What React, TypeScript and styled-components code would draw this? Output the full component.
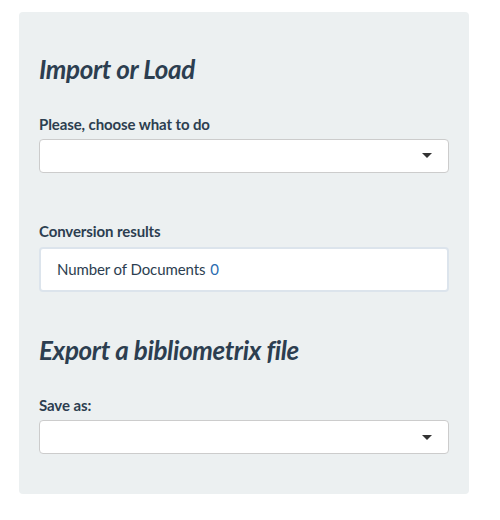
import React from "react";
import styled, { createGlobalStyle } from "styled-components";

const Global = createGlobalStyle`
  html, body { margin: 0; padding: 0; background: #ffffff; }
  body { font-family: Lato, "Noto Sans", sans-serif; color: #2c3e50; }
`;

const Page = styled.div`
  padding: 12px 31px 20px 19px;
`;

const Well = styled.div`
  background: #ecf0f1;
  border-radius: 4px;
  padding: 43px 20px 40px 20px;
  display: flex;
  flex-direction: column;
`;

const Heading = styled.h3<{ $top?: number }>`
  margin: ${(p) => p.$top ?? 0}px 0 0 0;
  font-size: 26px;
  font-weight: 700;
  font-style: italic;
  line-height: 1.1;
  color: #2c3e50;
  letter-spacing: -0.35px;
`;

const Label = styled.label<{ $top: number }>`
  display: block;
  margin-top: ${(p) => p.$top}px;
  font-size: 15px;
  font-weight: 700;
  line-height: 20px;
  color: #2c3e50;
  letter-spacing: -0.1px;
`;

const SelectBox = styled.div`
  margin-top: 5px;
  height: 34px;
  box-sizing: border-box;
  background: #fff;
  border: 1px solid #cccccc;
  border-radius: 4px;
  display: flex;
  align-items: center;
  justify-content: flex-end;
  padding-right: 16px;
`;

const Caret = styled.span`
  width: 0;
  height: 0;
  border-left: 5px solid transparent;
  border-right: 5px solid transparent;
  border-top: 5px solid #333;
`;

const Result = styled.div`
  margin-top: 6px;
  height: 45px;
  box-sizing: border-box;
  background: #fff;
  border: 2px solid #dce4ec;
  border-radius: 4px;
  display: flex;
  align-items: center;
  gap: 5px;
  padding-left: 16px;
  font-size: 15px;
  color: #2c3e50;
  letter-spacing: -0.1px;
`;

const Value = styled.span`
  color: #2a6bb0;
`;

export default function App() {
  return (
    <>
      <Global />
      <Page>
        <Well>
          <Heading>Import or Load</Heading>
          <Label $top={30}>Please, choose what to do</Label>
          <SelectBox>
            <Caret />
          </SelectBox>
          <Label $top={48}>Conversion results</Label>
          <Result>
            <span>Number of Documents</span>
            <Value>0</Value>
          </Result>
          <Heading $top={44}>Export a bibliometrix file</Heading>
          <Label $top={31}>Save as:</Label>
          <SelectBox>
            <Caret />
          </SelectBox>
        </Well>
      </Page>
    </>
  );
}
